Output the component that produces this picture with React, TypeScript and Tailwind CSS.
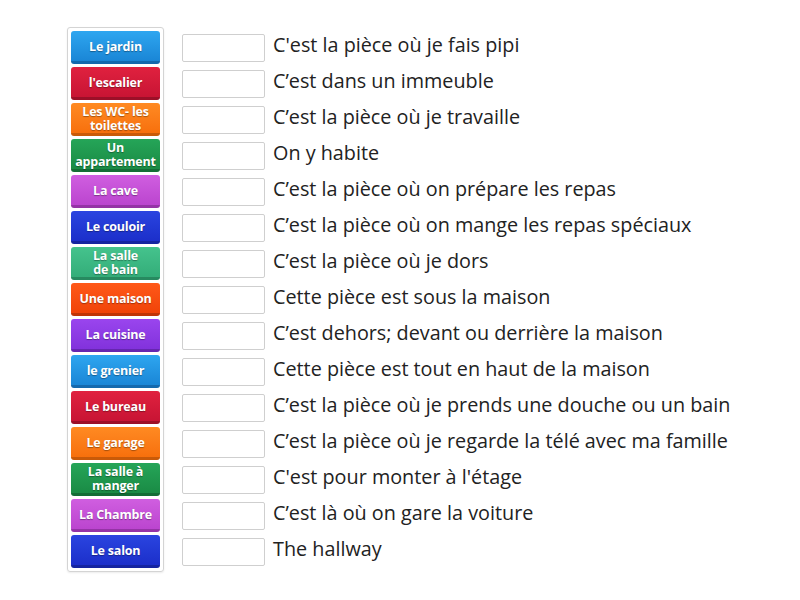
import React from "react";

const tiles: { label: React.ReactNode; cls: string }[] = [
  { label: "Le jardin", cls: "bg-linear-to-b from-[#2ea6f0] to-[#1a86d6] border-b-[#1469ad]" },
  { label: "l'escalier", cls: "bg-linear-to-b from-[#e0213f] to-[#c81434] border-b-[#9c0f28]" },
  { label: <>Les WC- les<br />toilettes</>, cls: "bg-linear-to-b from-[#ff8a22] to-[#f7700c] border-b-[#c95a08]" },
  { label: <>Un<br />appartement</>, cls: "bg-linear-to-b from-[#25a558] to-[#1a8b45] border-b-[#146d36]" },
  { label: "La cave", cls: "bg-linear-to-b from-[#d05ee0] to-[#bb45cf] border-b-[#9533a6]" },
  { label: "Le couloir", cls: "bg-linear-to-b from-[#2a44e0] to-[#1c2fca] border-b-[#1524a0]" },
  { label: <>La salle<br />de bain</>, cls: "bg-linear-to-b from-[#45c38d] to-[#33ad79] border-b-[#278a60]" },
  { label: "Une maison", cls: "bg-linear-to-b from-[#ff5818] to-[#f04408] border-b-[#c03506]" },
  { label: "La cuisine", cls: "bg-linear-to-b from-[#9a45ee] to-[#8232dc] border-b-[#6626b0]" },
  { label: "le grenier", cls: "bg-linear-to-b from-[#2ea6f0] to-[#1a86d6] border-b-[#1469ad]" },
  { label: "Le bureau", cls: "bg-linear-to-b from-[#e0213f] to-[#c81434] border-b-[#9c0f28]" },
  { label: "Le garage", cls: "bg-linear-to-b from-[#ff8a22] to-[#f7700c] border-b-[#c95a08]" },
  { label: <>La salle à<br />manger</>, cls: "bg-linear-to-b from-[#25a558] to-[#1a8b45] border-b-[#146d36]" },
  { label: "La Chambre", cls: "bg-linear-to-b from-[#d05ee0] to-[#bb45cf] border-b-[#9533a6]" },
  { label: "Le salon", cls: "bg-linear-to-b from-[#2a44e0] to-[#1c2fca] border-b-[#1524a0]" },
];

const clues = [
  "C'est la pièce où je fais pipi",
  "C’est dans un immeuble",
  "C’est la pièce où je travaille",
  "On y habite",
  "C’est la pièce où on prépare les repas",
  "C’est la pièce où on mange les repas spéciaux",
  "C’est la pièce où je dors",
  "Cette pièce est sous la maison",
  "C’est dehors; devant ou derrière la maison",
  "Cette pièce est tout en haut de la maison",
  "C’est la pièce où je prends une douche ou un bain",
  "C’est la pièce où je regarde la télé avec ma famille",
  "C'est pour monter à l'étage",
  "C’est là où on gare la voiture",
  "The hallway",
];

export default function App() {
  return (
    <div className="w-[800px] h-[600px] bg-white flex items-start pl-[67px] pt-[27px]" style={{ fontFamily: '"Open Sans", sans-serif' }}>
      <div className="w-[97px] border border-[#d4d4d4] rounded-[3px] p-[3px] flex flex-col gap-[3px] shadow-[0_1px_2px_rgba(0,0,0,0.08)]">
        {tiles.map((t, i) => (
          <div
            key={i}
            className={`h-[33px] rounded-[3px] border-b-[3px] flex items-center justify-center text-center text-white font-bold text-[12.5px] leading-[14px] tracking-[-0.2px] [text-shadow:0_1px_1px_rgba(0,0,0,0.35)] ${t.cls}`}
          >
            <span className="-mb-[2px]">{t.label}</span>
          </div>
        ))}
      </div>
      <div className="ml-[18px] mt-[7px] flex flex-col gap-[8px]">
        {clues.map((c, i) => (
          <div key={i} className="h-[28px] flex items-center">
            <div className="w-[83px] h-[28px] border border-[#cfcfcf] rounded-[2px] bg-white shrink-0" />
            <div className="ml-[8px] mb-[7px] text-[19.8px] leading-[27px] text-[#222] whitespace-nowrap">{c}</div>
          </div>
        ))}
      </div>
    </div>
  );
}
